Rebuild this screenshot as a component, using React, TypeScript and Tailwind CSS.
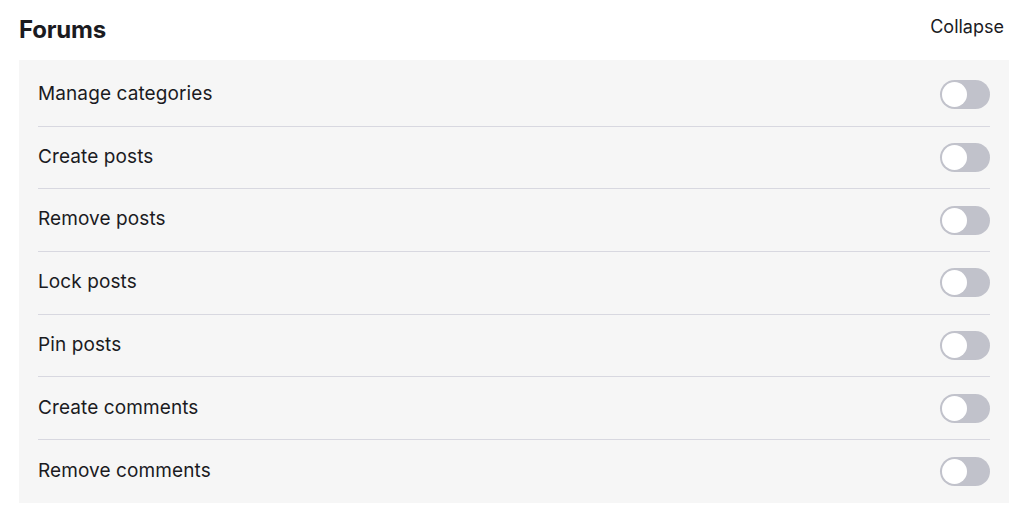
const PERMISSIONS = [
  "Manage categories",
  "Create posts",
  "Remove posts",
  "Lock posts",
  "Pin posts",
  "Create comments",
  "Remove comments",
];

function Toggle() {
  return (
    <button
      type="button"
      className="flex h-[29px] w-[50px] items-center rounded-full bg-[#c1c2cb] px-[2px]"
    >
      <span className="block h-[25px] w-[25px] rounded-full bg-white" />
    </button>
  );
}

export default function App() {
  return (
    <div
      className="min-h-screen bg-white pl-[19px] pr-[15px] text-[#1b1b1f]"
      style={{ fontFamily: "Inter, 'Noto Sans', sans-serif" }}
    >
      <div className="flex h-[60px] items-start justify-between">
        <h2 className="mt-[14px] text-[24px] font-bold leading-[32px] tracking-[-0.2px]">Forums</h2>
        <button className="mt-[14px] mr-[5px] text-[18px] leading-[26px]">Collapse</button>
      </div>

      <div className="bg-[#f6f6f6] px-[19px] pt-[4px]">
        {PERMISSIONS.map((label, i) => (
          <div
            key={label}
            className={`flex h-[62.7px] items-center justify-between ${
              i < PERMISSIONS.length - 1 ? "border-b border-[#d8d8e0]" : ""
            }`}
          >
            <span className="mb-[1px] text-[19px] tracking-[0.1px]">{label}</span>
            <Toggle />
          </div>
        ))}
      </div>
    </div>
  );
}
